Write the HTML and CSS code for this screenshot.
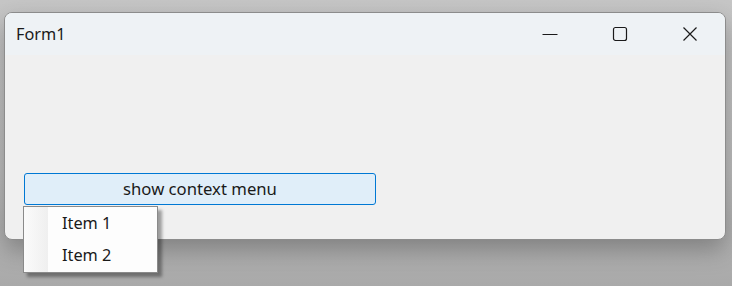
FILE: index.html
```html
<!DOCTYPE html>
<html lang="en">
<head>
    <meta charset="UTF-8">
    <title>Form1</title>
    <link rel="stylesheet" href="styles.css">
</head>
<body>
<div class="window">
    <div class="titlebar">
        <span class="title">Form1</span>
        <div class="caption">
            <div class="cap-btn">
                <svg width="16" height="16" viewBox="0 0 16 16"><line x1="0.5" y1="8.5" x2="15.5" y2="8.5" stroke="#1a1a1a" stroke-width="1.2"/></svg>
            </div>
            <div class="cap-btn">
                <svg width="16" height="16" viewBox="0 0 16 16"><rect x="1.5" y="1.5" width="13" height="13" rx="2" fill="none" stroke="#1a1a1a" stroke-width="1.2"/></svg>
            </div>
            <div class="cap-btn">
                <svg width="16" height="16" viewBox="0 0 16 16"><path d="M1.5 1.5 L14.5 14.5 M14.5 1.5 L1.5 14.5" stroke="#1a1a1a" stroke-width="1.2"/></svg>
            </div>
        </div>
    </div>
    <div class="client">
        <button class="btn">show context menu</button>
    </div>
</div>

<div class="menu">
    <div class="menu-item">Item 1</div>
    <div class="menu-item">Item 2</div>
</div>
</body>
</html>
```

FILE: styles.css
```css
html, body {
    margin: 0;
    height: 100%;
}

body {
    width: 732px;
    height: 286px;
    overflow: hidden;
    position: relative;
    background: linear-gradient(to bottom, #c6c6c6 0%, #bdbdbd 60%, #a9a9a9 100%);
    font-family: "Noto Sans", "Open Sans", sans-serif;
    padding-top: 12px;
    box-sizing: border-box;
}

.window {
    margin-left: 4px;
    width: 722px;
    height: 228px;
    box-sizing: border-box;
    border: 1px solid #8c8c8c;
    border-radius: 8px;
    background: #f0f0f0;
    box-shadow: 0 10px 24px rgba(0, 0, 0, 0.28);
    overflow: hidden;
}

.titlebar {
    height: 42px;
    display: flex;
    align-items: center;
    background: #eef2f5;
}

.title {
    flex: 1;
    padding-left: 11px;
    font-size: 16.3px;
    color: #1a1a1a;
    padding-bottom: 1px;
}

.caption {
    display: flex;
    height: 100%;
}

.cap-btn {
    width: 70px;
    height: 100%;
    display: flex;
    align-items: center;
    justify-content: center;
}

.cap-btn svg {
    display: block;
}

.client {
    padding: 118px 0 0 19px;
}

.btn {
    width: 352px;
    height: 32px;
    border: 1px solid #0078d4;
    border-radius: 3px;
    background: #e0eef9;
    font-family: "Noto Sans", "Open Sans", sans-serif;
    font-size: 16.7px;
    color: #1a1a1a;
    padding: 0 0 2px 0;
}

.menu {
    position: absolute;
    left: 23px;
    top: 206px;
    width: 135px;
    height: 67px;
    box-sizing: border-box;
    border: 1px solid #8a8a8a;
    padding-top: 1px;
    background: linear-gradient(to right, #fbfbfb 0px, #efefef 24px, #fdfdfd 24px);
    box-shadow: 4px 4px 3px rgba(0, 0, 0, 0.35);
}

.menu-item {
    height: 32px;
    line-height: 31px;
    padding-left: 38px;
    font-size: 16.3px;
    color: #1a1a1a;
}
```
